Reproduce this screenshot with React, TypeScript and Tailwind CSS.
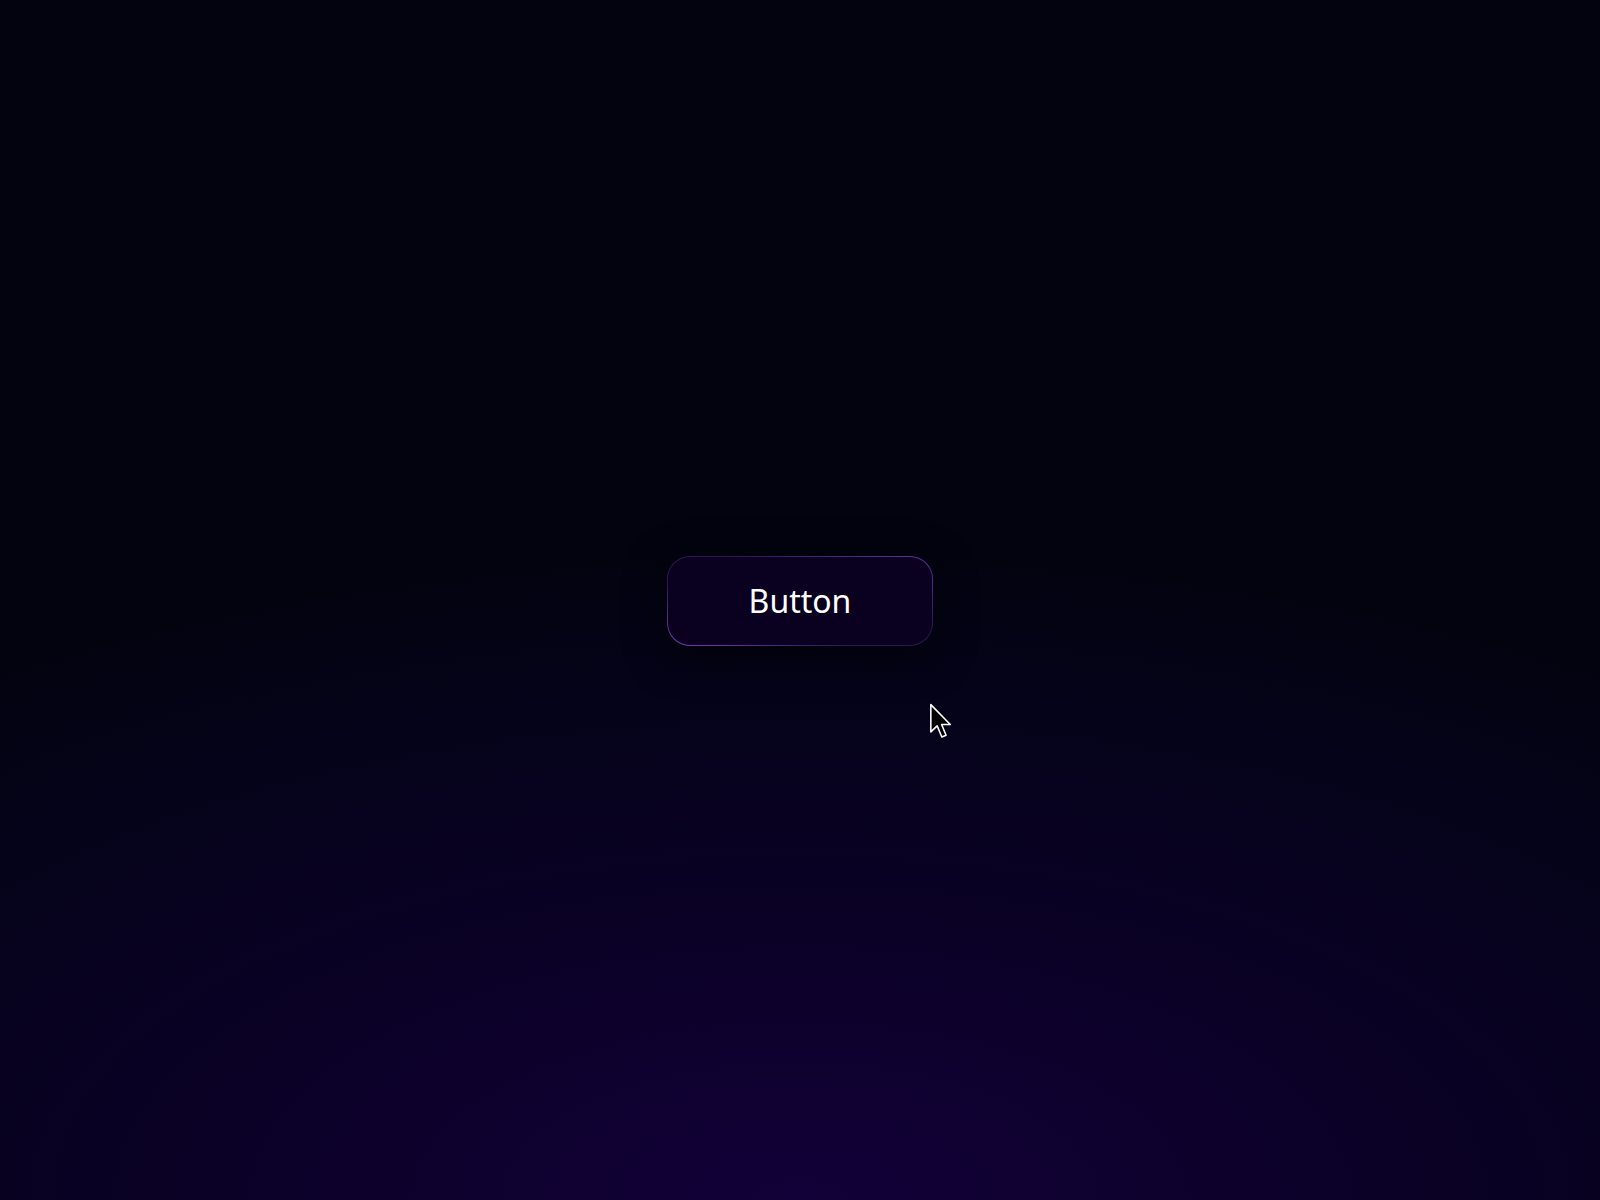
import React from "react"

function Cursor() {
  return (
    <svg width="27" height="40" viewBox="0 0 24 36" className="absolute left-[929px] top-[703px]">
      <path
        d="M1.5 1.5 L1.5 26 L7.2 20.6 L11.4 30.6 L15.2 29 L11.2 19.4 L19 19.4 Z"
        fill="#000"
        stroke="#fff"
        strokeWidth="1.4"
        strokeLinejoin="round"
      />
    </svg>
  )
}

export default function App() {
  return (
    <main className="relative min-h-screen w-full overflow-hidden bg-[#03030f] bg-[radial-gradient(ellipse_90%_55%_at_50%_100%,#120038_0%,#0b0127_40%,#05031a_75%,#03030f_100%)] flex items-center justify-center font-['Noto_Sans','Open_Sans',sans-serif]">
      <div className="mt-[2px] rounded-[23px] p-px bg-[linear-gradient(to_top_right,#7442b4_0%,#2c1752_35%,#2c1752_60%,#5e34a0_100%)] shadow-[0_10px_40px_rgba(0,0,0,0.6)]">
        <button className="w-[264px] h-[88px] rounded-[22px] bg-[#0a0120] text-white text-[32px] leading-none">
          Button
        </button>
      </div>
      <Cursor />
    </main>
  )
}
